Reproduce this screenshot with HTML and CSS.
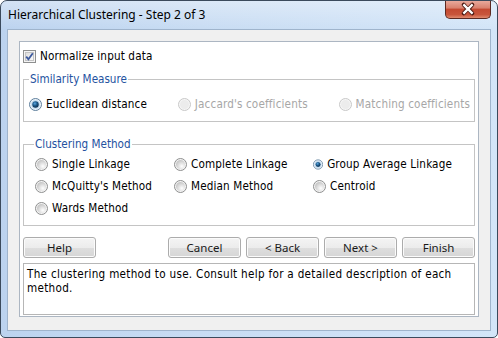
FILE: index.html
```html
<!DOCTYPE html>
<html>
<head>
<meta charset="utf-8">
<link rel="stylesheet" href="styles.css">
</head>
<body>
<div class="window">
  <div class="titlebar">
    <span class="title">Hierarchical Clustering - Step 2 of 3</span>
    <div class="close">
      <svg width="46" height="18" viewBox="0 0 46 18">
        <path d="M18.5 4.5 L22.5 9 L18.5 13.5 M27.5 4.5 L23.5 9 L27.5 13.5" fill="none" stroke="#4a1810" stroke-width="4.2" stroke-linecap="round"/>
        <path d="M19 5 L27 13 M27 5 L19 13" fill="none" stroke="#ffffff" stroke-width="2.4" stroke-linecap="square"/>
      </svg>
    </div>
  </div>
  <div class="client">
    <div class="panel">
      <label class="check-row">
        <svg class="box" width="13" height="13" viewBox="0 0 13 13">
          <defs>
            <linearGradient id="cbg" x1="0" y1="0" x2="1" y2="1">
              <stop offset="0" stop-color="#dcdcdc"/>
              <stop offset="1" stop-color="#fafafa"/>
            </linearGradient>
          </defs>
          <rect x="0.5" y="0.5" width="12" height="12" fill="#f4f4f4" stroke="#8e8f8f"/>
          <rect x="2.5" y="2.5" width="8" height="8" fill="url(#cbg)" stroke="#c4c4c4"/>
          <path d="M3.2 6.6 L5.4 9.2 L9.8 3.2" fill="none" stroke="#3d5a9e" stroke-width="1.8"/>
        </svg>
        <span>Normalize input data</span>
      </label>

      <fieldset class="group sim">
        <legend>Similarity Measure</legend>
        <div class="sim-row">
          <label class="opt">
            <svg class="radio" width="13" height="13" viewBox="0 0 13 13"><use href="#r-on"/></svg>
            <span>Euclidean distance</span>
          </label>
          <label class="opt disabled">
            <svg class="radio" width="13" height="13" viewBox="0 0 13 13"><use href="#r-dis"/></svg>
            <span>Jaccard's coefficients</span>
          </label>
          <label class="opt disabled">
            <svg class="radio" width="13" height="13" viewBox="0 0 13 13"><use href="#r-dis"/></svg>
            <span>Matching coefficients</span>
          </label>
        </div>
      </fieldset>

      <fieldset class="group clus">
        <legend>Clustering Method</legend>
        <div class="clus-grid">
          <label class="opt"><svg class="radio" width="13" height="13" viewBox="0 0 13 13"><use href="#r-off"/></svg><span>Single Linkage</span></label>
          <label class="opt"><svg class="radio" width="13" height="13" viewBox="0 0 13 13"><use href="#r-off"/></svg><span>Complete Linkage</span></label>
          <label class="opt"><svg class="radio" width="13" height="13" viewBox="0 0 13 13"><use href="#r-on"/></svg><span>Group Average Linkage</span></label>
          <label class="opt"><svg class="radio" width="13" height="13" viewBox="0 0 13 13"><use href="#r-off"/></svg><span>McQuitty's Method</span></label>
          <label class="opt"><svg class="radio" width="13" height="13" viewBox="0 0 13 13"><use href="#r-off"/></svg><span>Median Method</span></label>
          <label class="opt"><svg class="radio" width="13" height="13" viewBox="0 0 13 13"><use href="#r-off"/></svg><span>Centroid</span></label>
          <label class="opt"><svg class="radio" width="13" height="13" viewBox="0 0 13 13"><use href="#r-off"/></svg><span>Wards Method</span></label>
        </div>
      </fieldset>

      <div class="buttons">
        <button class="btn">Help</button>
        <div class="nav">
          <button class="btn">Cancel</button>
          <button class="btn">&lt; Back</button>
          <button class="btn">Next &gt;</button>
          <button class="btn">Finish</button>
        </div>
      </div>

      <div class="desc">The clustering method to use. Consult help for a detailed description of each<br>method.</div>
    </div>
  </div>
</div>

<svg class="defs" width="0" height="0">
  <defs>
    <radialGradient id="rg-off" cx="0.65" cy="0.7" r="0.7">
      <stop offset="0" stop-color="#ffffff"/>
      <stop offset="1" stop-color="#c6c6c6"/>
    </radialGradient>
    <radialGradient id="rg-dot" cx="0.4" cy="0.35" r="0.7">
      <stop offset="0" stop-color="#5aa6e0"/>
      <stop offset="0.5" stop-color="#1a5686"/>
      <stop offset="1" stop-color="#0c2a48"/>
    </radialGradient>
    <g id="r-off">
      <circle cx="6.5" cy="6.5" r="6" fill="#f3f3f3" stroke="#8e8f8f"/>
      <circle cx="6.5" cy="6.5" r="4.5" fill="url(#rg-off)"/>
    </g>
    <g id="r-on">
      <circle cx="6.5" cy="6.5" r="6" fill="#eef4fa" stroke="#5f7f9c"/>
      <circle cx="6.5" cy="6.5" r="4.5" fill="#c4dcf0"/>
      <circle cx="6.5" cy="6.5" r="3.2" fill="url(#rg-dot)"/>
    </g>
    <g id="r-dis">
      <circle cx="6.5" cy="6.5" r="6" fill="#f6f6f6" stroke="#c8c8c8"/>
      <circle cx="6.5" cy="6.5" r="4.5" fill="#ececec"/>
    </g>
  </defs>
</svg>
</body>
</html>
```

FILE: styles.css
```css
html, body {
  margin: 0;
  padding: 0;
  background: #ffffff;
}

.window {
  width: 498px;
  height: 338px;
  box-sizing: border-box;
  border: 1px solid #3b4a5c;
  border-radius: 7px 7px 5px 5px;
  background: linear-gradient(to right, #bcd3ef 0%, #c8dcf3 40%, #d3e5f8 100%);
  display: flex;
  flex-direction: column;
  overflow: hidden;
  font-family: "DejaVu Sans Condensed", "DejaVu Sans", sans-serif;
  font-size: 11.6px;
  letter-spacing: 0.15px;
  color: #000000;
}

.titlebar {
  height: 28px;
  display: flex;
  justify-content: space-between;
  align-items: flex-start;
  padding: 0 6px 0 7px;
  background: linear-gradient(to bottom, rgba(255,255,255,0.35), rgba(255,255,255,0));
}

.title {
  font-family: "Noto Sans", "Open Sans", sans-serif;
  font-size: 12px;
  letter-spacing: 0;
  line-height: 28px;
  color: #000000;
}

.close {
  width: 46px;
  height: 18px;
  box-sizing: border-box;
  border: 1px solid #5c2a22;
  border-top: none;
  border-radius: 0 0 5px 5px;
  background: linear-gradient(to bottom, #e9a99b 0%, #d9826f 40%, #c44a32 50%, #c8553b 80%, #e08a6e 100%);
  display: flex;
  align-items: center;
  justify-content: center;
}

.close svg {
  display: block;
  margin-top: -1px;
}

.client {
  flex: 1;
  margin: 0 6px 6px 6px;
  border: 1px solid #9fb4cc;
  background: #f0f0f0;
  padding: 11px 11px 0 11px;
}

.panel {
  height: 274px;
  background: #ffffff;
  border: 1px solid #acb6c2;
  padding: 0 3px;
}

.check-row {
  display: flex;
  align-items: center;
  height: 14px;
  margin-top: 7px;
}

.check-row .box {
  display: block;
  margin-right: 4px;
}

.group {
  margin: 0;
  border: 1px solid #c4c4c4;
  padding: 0;
  min-width: 0;
}

.group legend {
  color: #2452a0;
  line-height: 14px;
  padding: 0 1px;
  letter-spacing: 0;
}

.sim {
  margin-top: 9px;
  padding: 11px 4px 10px 5px;
}

.sim legend {
  margin-left: 0;
}

.clus {
  margin-top: 15px;
  padding: 6px 11px 10px 11px;
}

.clus legend {
  margin-left: -1px;
}

.sim-row {
  display: flex;
  justify-content: space-between;
}

.clus-grid {
  display: grid;
  grid-template-columns: 139px 139px 139px;
  row-gap: 8px;
}

.opt {
  display: flex;
  align-items: center;
  height: 14px;
  white-space: nowrap;
}

.opt .radio {
  display: block;
  margin-right: 4px;
}

.opt.disabled {
  color: #a7a7a7;
}

.buttons {
  display: flex;
  justify-content: space-between;
  margin-top: 11px;
}

.nav {
  display: flex;
  gap: 5px;
}

.btn {
  width: 73px;
  height: 21px;
  margin: 0;
  padding: 0;
  border: 1px solid #acacac;
  border-radius: 3px;
  background: linear-gradient(to bottom, #f4f4f4 0%, #ececec 50%, #dedede 51%, #d6d6d6 100%);
  box-shadow: inset 0 0 0 1px #fbfbfb;
  font-family: "Noto Sans", "Open Sans", sans-serif;
  font-size: 11.5px;
  letter-spacing: 0;
  color: #1a1a1a;
  line-height: 19px;
}

.desc {
  margin-top: 5px;
  height: 47px;
  border: 1px solid #b6b6b6;
  padding: 3px 3px 0 3px;
  line-height: 14px;
  letter-spacing: 0.3px;
  white-space: nowrap;
}

.defs {
  position: absolute;
  width: 0;
  height: 0;
}
```
